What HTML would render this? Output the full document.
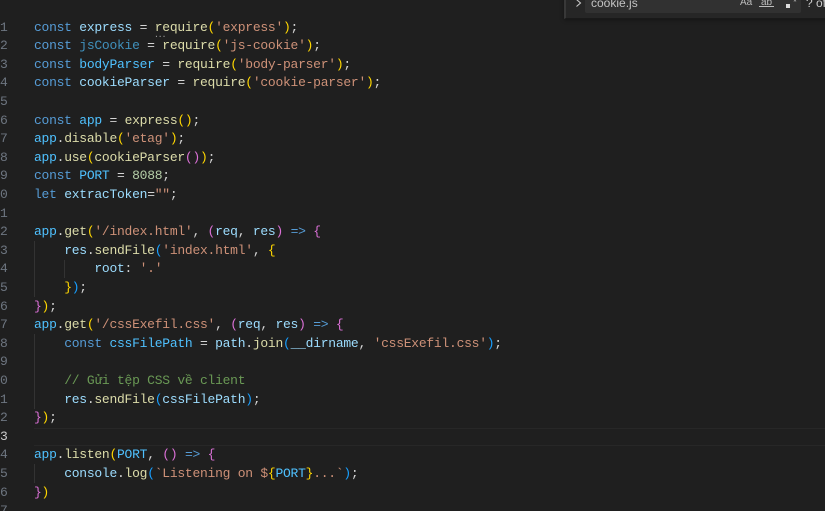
<!DOCTYPE html>
<html><head><meta charset="utf-8">
<style>
html,body{margin:0;padding:0;background:#1f1f1f;}
#e{position:relative;width:825px;height:511px;overflow:hidden;background:#1f1f1f;font-family:"Liberation Mono","DejaVu Sans Mono",monospace;font-size:13px;letter-spacing:-.257px;line-height:18.6px;color:#d4d4d4;}
#t{position:absolute;left:0;top:0;width:825px;height:511px;filter:blur(.3px);}
.l,.n{position:absolute;white-space:pre;height:18.6px;margin-top:.7px;}
.l{left:34px;}
.n{left:0;color:#6e7681;}
.k{color:#569cd6}.v{color:#9cdcfe}.c{color:#4fc1ff}.f{color:#dcdcaa}.s{color:#ce9178}.g{color:#6a9955}.d{color:#b5cea8}
.y{color:#ffd700}.p{color:#da70d6}.b{color:#179fff}.u{color:#4fc1ff;opacity:.7}
.i{position:absolute;width:1px;background:#333;}
#cur{position:absolute;left:34px;right:0;top:428px;height:16px;border-top:1px solid #272727;border-bottom:1px solid #272727;}
#find{position:absolute;left:564px;top:-20px;width:270px;height:38px;background:#262626;border-left:2px solid #383838;border-bottom:1px solid #191919;box-shadow:0 1px 3px #151515;font-family:"Liberation Sans",sans-serif;letter-spacing:0;}
#box{position:absolute;left:19px;top:0;width:216px;height:33px;background:#313131;border-radius:2px;}
#find span{position:absolute;white-space:pre;color:#bdbdbd;}
</style></head><body><div id="e"><div id="t">
<div id="cur"></div>
<div class="i" style="left:34px;top:241px;height:56px"></div>
<div class="i" style="left:34px;top:334px;height:75px"></div>
<div class="i" style="left:34px;top:464px;height:19px"></div>
<div class="i" style="left:64px;top:260px;height:18px"></div>
<div class="n" style="top:18px">1</div><div class="l" style="top:18px"><span class="k">const</span> <span class="v">express</span> = <span class="f">require</span><span class="y">(</span><span class="s">'express'</span><span class="y">)</span>;</div>
<div style="position:absolute;left:154px;top:34px;color:#aaa;font-size:8px;line-height:4px;letter-spacing:-1px">...</div>
<div class="n" style="top:36.6px">2</div><div class="l" style="top:36.6px"><span class="k">const</span> <span class="u">jsCookie</span> = <span class="f">require</span><span class="y">(</span><span class="s">'js-cookie'</span><span class="y">)</span>;</div>
<div class="n" style="top:55.2px">3</div><div class="l" style="top:55.2px"><span class="k">const</span> <span class="c">bodyParser</span> = <span class="f">require</span><span class="y">(</span><span class="s">'body-parser'</span><span class="y">)</span>;</div>
<div class="n" style="top:73.8px">4</div><div class="l" style="top:73.8px"><span class="k">const</span> <span class="v">cookieParser</span> = <span class="f">require</span><span class="y">(</span><span class="s">'cookie-parser'</span><span class="y">)</span>;</div>
<div class="n" style="top:92.4px">5</div>
<div class="n" style="top:111px">6</div><div class="l" style="top:111px"><span class="k">const</span> <span class="c">app</span> = <span class="f">express</span><span class="y">()</span>;</div>
<div class="n" style="top:129.6px">7</div><div class="l" style="top:129.6px"><span class="c">app</span>.<span class="f">disable</span><span class="y">(</span><span class="s">'etag'</span><span class="y">)</span>;</div>
<div class="n" style="top:148.2px">8</div><div class="l" style="top:148.2px"><span class="c">app</span>.<span class="f">use</span><span class="y">(</span><span class="f">cookieParser</span><span class="p">()</span><span class="y">)</span>;</div>
<div class="n" style="top:166.8px">9</div><div class="l" style="top:166.8px"><span class="k">const</span> <span class="c">PORT</span> = <span class="d">8088</span>;</div>
<div class="n" style="top:185.4px">0</div><div class="l" style="top:185.4px"><span class="k">let</span> <span class="v">extracToken</span>=<span class="s">""</span>;</div>
<div class="n" style="top:204px">1</div>
<div class="n" style="top:222.6px">2</div><div class="l" style="top:222.6px"><span class="c">app</span>.<span class="f">get</span><span class="y">(</span><span class="s">'/index.html'</span>, <span class="p">(</span><span class="v">req</span>, <span class="v">res</span><span class="p">)</span> <span class="k">=&gt;</span> <span class="p">{</span></div>
<div class="n" style="top:241.2px">3</div><div class="l" style="top:241.2px">    <span class="v">res</span>.<span class="f">sendFile</span><span class="b">(</span><span class="s">'index.html'</span>, <span class="y">{</span></div>
<div class="n" style="top:259.8px">4</div><div class="l" style="top:259.8px">        <span class="v">root</span>: <span class="s">'.'</span></div>
<div class="n" style="top:278.4px">5</div><div class="l" style="top:278.4px">    <span class="y">}</span><span class="b">)</span>;</div>
<div class="n" style="top:297px">6</div><div class="l" style="top:297px"><span class="p">}</span><span class="y">)</span>;</div>
<div class="n" style="top:315.6px">7</div><div class="l" style="top:315.6px"><span class="c">app</span>.<span class="f">get</span><span class="y">(</span><span class="s">'/cssExefil.css'</span>, <span class="p">(</span><span class="v">req</span>, <span class="v">res</span><span class="p">)</span> <span class="k">=&gt;</span> <span class="p">{</span></div>
<div class="n" style="top:334.2px">8</div><div class="l" style="top:334.2px">    <span class="k">const</span> <span class="c">cssFilePath</span> = <span class="v">path</span>.<span class="f">join</span><span class="b">(</span><span class="v">__dirname</span>, <span class="s">'cssExefil.css'</span><span class="b">)</span>;</div>
<div class="n" style="top:352.8px">9</div>
<div class="n" style="top:371.4px">0</div><div class="l" style="top:371.4px">    <span class="g">// Gửi tệp CSS về client</span></div>
<div class="n" style="top:390px">1</div><div class="l" style="top:390px">    <span class="v">res</span>.<span class="f">sendFile</span><span class="b">(</span><span class="v">cssFilePath</span><span class="b">)</span>;</div>
<div class="n" style="top:408.6px">2</div><div class="l" style="top:408.6px"><span class="p">}</span><span class="y">)</span>;</div>
<div class="n" style="top:427.2px;color:#ccc">3</div>
<div class="n" style="top:445.8px">4</div><div class="l" style="top:445.8px"><span class="c">app</span>.<span class="f">listen</span><span class="y">(</span><span class="c">PORT</span>, <span class="p">()</span> <span class="k">=&gt;</span> <span class="p">{</span></div>
<div class="n" style="top:464.4px">5</div><div class="l" style="top:464.4px">    <span class="v">console</span>.<span class="f">log</span><span class="b">(</span><span class="s">`Listening on </span><span style="color:#ce9178">$</span><span class="y">{</span><span class="c">PORT</span><span class="y">}</span><span class="s">...`</span><span class="b">)</span>;</div>
<div class="n" style="top:483px">6</div><div class="l" style="top:483px"><span class="p">}</span><span class="y">)</span></div>
<div class="n" style="top:501.6px">7</div>
<div id="find">
<svg style="position:absolute;left:8px;top:18px" width="9" height="10" viewBox="0 0 9 10"><path d="M2.5 1.5 L6.5 5 L2.5 8.5" fill="none" stroke="#c8c8c8" stroke-width="1.1"/></svg>
<div id="box"></div>
<span style="left:25px;top:15px;font-size:12px;line-height:16px;color:#c4c4c4">cookie.js</span>
<span style="left:174px;top:16px;font-size:10px;line-height:14px">Aa</span>
<span style="left:195px;top:16px;font-size:10px;line-height:14px">ab</span>
<span style="left:193px;top:26px;width:15px;height:1px;background:#bdbdbd"></span>
<span style="left:220px;top:24px;width:4px;height:4px;background:#ddd"></span>
<span style="left:227px;top:18px;font-size:10px;line-height:10px">*</span>
<span style="left:240px;top:15px;font-size:12px;line-height:16px;color:#ccc">? of</span>
</div>
</div></div></body></html>
